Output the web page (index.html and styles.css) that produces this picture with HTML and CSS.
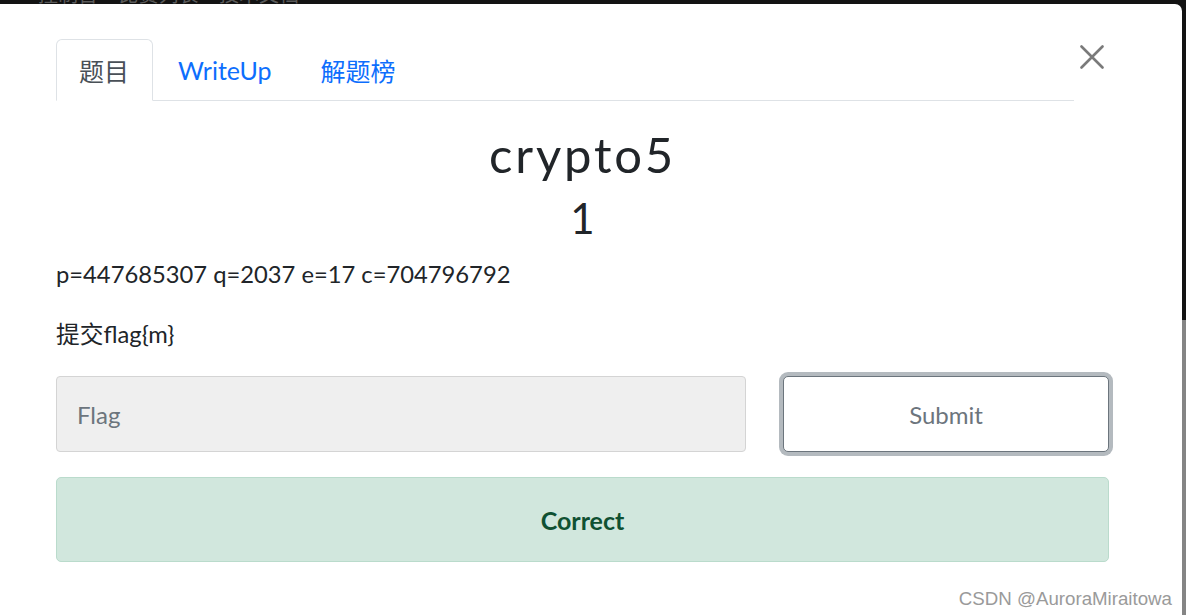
FILE: index.html
```html
<!DOCTYPE html>
<html lang="zh">
<head>
<meta charset="utf-8">
<title>crypto5</title>
<link rel="stylesheet" href="styles.css">
</head>
<body>
<div class="stage">
  <div class="backdrop-top" aria-hidden="true"><span>控制台 &nbsp;&nbsp; 比赛列表 &nbsp;&nbsp; 技术文档</span></div>
  <div class="modal">
    <div class="modal-header">
      <ul class="tabs">
        <li class="tab active">题目</li>
        <li class="tab">WriteUp</li>
        <li class="tab">解题榜</li>
      </ul>
      <button class="close" aria-label="Close">
        <svg width="24" height="24" viewBox="0 0 24 24"><path d="M1.5 1.5 L22.5 22.5 M22.5 1.5 L1.5 22.5" stroke="#7a7a7a" stroke-width="2.6" stroke-linecap="round" fill="none"/></svg>
      </button>
    </div>
    <div class="modal-body">
      <h2 class="challenge-name">crypto5</h2>
      <h3 class="challenge-value">1</h3>
      <p class="desc">p=447685307 q=2037 e=17 c=704796792</p>
      <p class="desc second">提交flag{m}</p>
      <div class="submit-row">
        <input class="flag-input" type="text" placeholder="Flag">
        <button class="submit-btn">Submit</button>
      </div>
      <div class="alert">Correct</div>
    </div>
    <div class="watermark">CSDN @AuroraMiraitowa</div>
  </div>
</div>
<div class="scrollbar"><div class="track"></div><div class="thumb"></div></div>
</body>
</html>
```
FILE: styles.css
```css
html, body {
  margin: 0;
  padding: 0;
  height: 100%;
  overflow: hidden;
}
body {
  background: #131313;
  display: flex;
  font-family: Lato, "Noto Sans CJK SC", sans-serif;
}
.stage {
  width: 1182px;
  display: flex;
  flex-direction: column;
}
.backdrop-top {
  height: 4px;
  overflow: hidden;
  padding-left: 38px;
  color: #5a5a5a;
  font-size: 20px;
  line-height: 20px;
}
.backdrop-top span {
  display: block;
  margin-top: -16px;
}
.modal {
  flex: 1;
  background: #fff;
  border-top-right-radius: 7px;
  display: flex;
  flex-direction: column;
  padding-left: 56px;
  padding-right: 73px;
}
.modal-header {
  display: flex;
  align-items: flex-start;
  padding-top: 35px;
}
.tabs {
  list-style: none;
  margin: 0;
  padding: 0;
  display: flex;
  width: 1018px;
  border-bottom: 1px solid #dee2e6;
}
.tab {
  height: 60px;
  padding: 0 23px 0 22px;
  display: flex;
  align-items: center;
  font-size: 25px;
  color: #0d6efd;
  border: 1px solid transparent;
  border-top-left-radius: 6px;
  border-top-right-radius: 6px;
  margin-bottom: -1px;
}
.tab + .tab {
  padding-left: 24px;
}
.tab.active {
  color: #495057;
  border-color: #dee2e6 #dee2e6 #fff;
  background: #fff;
}
.close {
  border: 0;
  background: none;
  padding: 0;
  margin: 6px 0 0 6px;
  width: 24px;
  height: 24px;
  display: flex;
}
.modal-body {
  display: flex;
  flex-direction: column;
}
.challenge-name {
  margin: 23px 0 0;
  text-align: center;
  font-weight: 400;
  font-size: 49px;
  letter-spacing: 2.8px;
  line-height: 60px;
  color: #212529;
}
.challenge-value {
  margin: 4px 0 0;
  text-align: center;
  font-weight: 400;
  font-size: 42px;
  line-height: 60px;
  color: #212529;
}
.desc {
  margin: 11px 0 0;
  font-size: 23.75px;
  line-height: 30px;
  color: #212529;
}
.desc.second {
  margin-top: 30px;
}
.submit-row {
  margin-top: 27px;
  display: grid;
  grid-template-columns: 1fr 326px;
  gap: 37px;
}
.flag-input {
  height: 76px;
  box-sizing: border-box;
  background: #efefef;
  border: 1px solid #d4d4d4;
  border-radius: 4px;
  padding: 0 20px;
  font-family: Lato, sans-serif;
  font-size: 24px;
  color: #495057;
}
.flag-input::placeholder {
  color: #6c757d;
}
.submit-btn {
  height: 76px;
  box-sizing: border-box;
  background: #fff;
  border: 1px solid #6c757d;
  border-radius: 5px;
  box-shadow: 0 0 0 4px #b4babf;
  font-family: Lato, sans-serif;
  font-size: 24px;
  color: #6c757d;
}
.alert {
  margin-top: 25px;
  height: 85px;
  box-sizing: border-box;
  background: #d1e7dd;
  border: 1px solid #badbcc;
  border-radius: 5px;
  display: flex;
  align-items: center;
  justify-content: center;
  font-size: 25px;
  font-weight: 700;
  color: #0f5132;
}
.watermark {
  margin-top: auto;
  margin-right: -63px;
  padding-bottom: 5px;
  text-align: right;
  font-family: "Liberation Sans", Arial, sans-serif;
  font-size: 18.7px;
  color: #9a9a9a;
}
.scrollbar {
  width: 4px;
  display: flex;
  flex-direction: column;
}
.scrollbar .track {
  height: 320px;
  background: #131313;
}
.scrollbar .thumb {
  flex: 1;
  background: #858585;
}
```
